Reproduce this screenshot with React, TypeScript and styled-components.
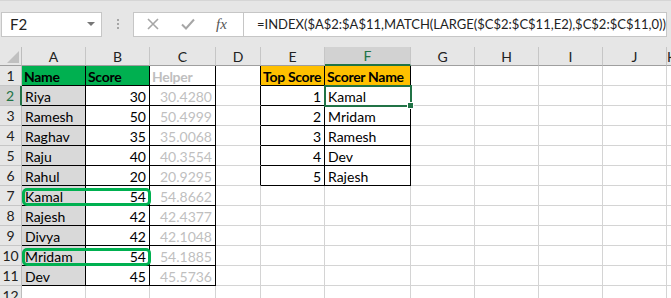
import React from 'react';
import styled, { createGlobalStyle } from 'styled-components';

const GlobalStyle = createGlobalStyle`
  body {
    margin: 0;
    background: #ffffff;
    font-family: Lato, "Open Sans", sans-serif;
  }
`;

const GRID = '#d4d4d4';
const BLACK = '#000000';
const XL_GREEN = '#217346';

const Page = styled.div`
  width: 671px;
  height: 298px;
  overflow: hidden;
  background: #ffffff;
`;

const Toolbar = styled.div`
  display: flex;
  align-items: center;
  height: 47px;
  box-sizing: border-box;
  padding: 11px 4px 11px 1px;
  background: #e6e6e6;
  border-top: 1px solid #d6d6d6;
`;

const NameBox = styled.div`
  display: flex;
  flex-shrink: 0;
  align-items: center;
  justify-content: space-between;
  width: 101px;
  height: 25px;
  box-sizing: border-box;
  padding: 0 6px 0 8px;
  background: #ffffff;
  border: 1px solid #c6c6c6;
  font-size: 15px;
  color: #222;
`;

const Caret = styled.span`
  width: 0;
  height: 0;
  border-left: 4px solid transparent;
  border-right: 4px solid transparent;
  border-top: 4px solid #777;
`;

const Dots = styled.div`
  display: flex;
  flex-shrink: 0;
  flex-direction: column;
  gap: 2px;
  width: 31px;
  align-items: center;
  span {
    width: 2px;
    height: 2px;
    background: #a6a6a6;
  }
`;

const FormulaBox = styled.div`
  display: flex;
  flex: 1;
  min-width: 0;
  height: 25px;
  box-sizing: border-box;
  background: #ffffff;
  border: 1px solid #c6c6c6;
`;

const IconArea = styled.div`
  display: flex;
  flex-shrink: 0;
  align-items: center;
  width: 110px;
  box-sizing: border-box;
  border-right: 1px solid #c6c6c6;
  margin-right: 2px;
  padding-left: 13px;
`;

const Fx = styled.span`
  margin-left: 21px;
  font-family: "Liberation Serif", serif;
  font-style: italic;
  font-size: 15px;
  color: #555;
`;

const FormulaText = styled.div`
  display: flex;
  flex-shrink: 0;
  align-items: center;
  padding-left: 11px;
  font-size: 13px;
  color: #222;
  white-space: nowrap;
`;

const Sheet = styled.div`
  position: relative;
  display: grid;
  grid-template-columns: 22px 64px 64px 66px 45px 64px 86px 64px 64px 64px 64px 1fr;
  grid-template-rows: 19px repeat(12, 20px);
  font-size: 14px;
`;

const Corner = styled.div`
  position: relative;
  background: #e6e6e6;
  border-right: 1px solid #bdbdbd;
  border-bottom: 1px solid #9f9f9f;
  &::after {
    content: '';
    position: absolute;
    right: 2px;
    bottom: 2px;
    border-left: 12px solid transparent;
    border-bottom: 12px solid #c0c0c0;
  }
`;

const ColHead = styled.div<{ $active?: boolean }>`
  display: flex;
  align-items: center;
  justify-content: center;
  box-sizing: border-box;
  background: ${({ $active }) => ($active ? '#d2d2d2' : '#e6e6e6')};
  color: ${({ $active }) => ($active ? XL_GREEN : '#222')};
  border-right: 1px solid #c6c6c6;
  border-bottom: ${({ $active }) => ($active ? `2px solid ${XL_GREEN}` : '1px solid #9f9f9f')};
`;

const RowHead = styled.div<{ $active?: boolean }>`
  display: flex;
  align-items: center;
  justify-content: center;
  box-sizing: border-box;
  background: ${({ $active }) => ($active ? '#d2d2d2' : '#e6e6e6')};
  color: ${({ $active }) => ($active ? XL_GREEN : '#222')};
  border-right: ${({ $active }) => ($active ? `2px solid ${XL_GREEN}` : '1px solid #bdbdbd')};
  border-bottom: 1px solid #c6c6c6;
`;

const Cell = styled.div<{
  $fill?: string;
  $bold?: boolean;
  $num?: boolean;
  $color?: string;
  $right: string;
  $bottom: string;
}>`
  display: flex;
  align-items: center;
  justify-content: ${({ $num }) => ($num ? 'flex-end' : 'flex-start')};
  box-sizing: border-box;
  padding: 2px 3px 0 ${({ $bold }) => ($bold ? 2 : 3)}px;
  overflow: hidden;
  white-space: nowrap;
  background: ${({ $fill }) => $fill || '#ffffff'};
  font-weight: ${({ $bold }) => ($bold ? 700 : 400)};
  letter-spacing: ${({ $bold }) => ($bold ? '-0.3px' : '0')};
  color: ${({ $color }) => $color || '#000'};
  border-right: 1px solid ${({ $right }) => $right};
  border-bottom: 1px solid ${({ $bottom }) => $bottom};
`;

const Highlight = styled.div<{ $top: number }>`
  position: absolute;
  left: 22px;
  top: ${({ $top }) => $top}px;
  width: 129px;
  height: 18px;
  box-sizing: border-box;
  border: 3px solid #00b050;
  border-radius: 5px;
  pointer-events: none;
`;

const Selection = styled.div`
  position: absolute;
  left: 324px;
  top: 38px;
  width: 88px;
  height: 22px;
  box-sizing: border-box;
  border: 2px solid ${XL_GREEN};
  pointer-events: none;
  &::after {
    content: '';
    position: absolute;
    right: -4px;
    bottom: -4px;
    width: 5px;
    height: 5px;
    background: ${XL_GREEN};
    border: 1px solid #ffffff;
  }
`;

const columns = ['A', 'B', 'C', 'D', 'E', 'F', 'G', 'H', 'I', 'J', 'K'];

type Value = string | number;

const rows: Value[][] = [
  ['Name', 'Score', 'Helper', '', 'Top Score', 'Scorer Name'],
  ['Riya', 30, '30.4280', '', 1, 'Kamal'],
  ['Ramesh', 50, '50.4999', '', 2, 'Mridam'],
  ['Raghav', 35, '35.0068', '', 3, 'Ramesh'],
  ['Raju', 40, '40.3554', '', 4, 'Dev'],
  ['Rahul', 20, '20.9295', '', 5, 'Rajesh'],
  ['Kamal', 54, '54.8662'],
  ['Rajesh', 42, '42.4377'],
  ['Divya', 42, '42.1048'],
  ['Mridam', 54, '54.1885'],
  ['Dev', 45, '45.5736'],
  [],
];

// bordered ranges: A1:C11 and E1:F6
const inBox = (r: number, c: number) =>
  (r >= 1 && r <= 11 && c >= 0 && c <= 2) || (r >= 1 && r <= 6 && c >= 4 && c <= 5);

const cellStyle = (r: number, c: number, v: Value) => {
  if (r === 1) {
    if (c <= 1) return { fill: '#00b050', bold: true };
    if (c === 2) return { bold: true, color: '#bfbfbf' };
    if (c === 4 || c === 5) return { fill: '#ffc000', bold: true };
    return {};
  }
  if (c === 0 && r <= 11) return { fill: '#d9d9d9' };
  if (c === 2) return { num: true, color: '#bfbfbf' };
  return { num: typeof v === 'number' };
};

const App: React.FC = () => (
  <Page>
    <GlobalStyle />
    <Toolbar>
      <NameBox>
        F2
        <Caret />
      </NameBox>
      <Dots>
        <span />
        <span />
        <span />
      </Dots>
      <FormulaBox>
        <IconArea>
          <svg width="12" height="12" viewBox="0 0 12 12">
            <path d="M1 1L11 11M11 1L1 11" stroke="#a6a6a6" strokeWidth="1.6" fill="none" />
          </svg>
          <svg width="14" height="12" viewBox="0 0 14 12" style={{ marginLeft: 22 }}>
            <path d="M1 6.5L5 10.5L13 1.5" stroke="#a6a6a6" strokeWidth="2" fill="none" />
          </svg>
          <Fx>fx</Fx>
        </IconArea>
        <FormulaText>=INDEX($A$2:$A$11,MATCH(LARGE($C$2:$C$11,E2),$C$2:$C$11,0))</FormulaText>
      </FormulaBox>
    </Toolbar>
    <Sheet>
      <Corner />
      {columns.map((col) => (
        <ColHead key={col} $active={col === 'F'}>
          {col}
        </ColHead>
      ))}
      {rows.map((row, i) => {
        const r = i + 1;
        return (
          <React.Fragment key={r}>
            <RowHead $active={r === 2}>{r}</RowHead>
            {columns.map((_, c) => {
              const v = row[c] ?? '';
              const s = cellStyle(r, c, v) as {
                fill?: string;
                bold?: boolean;
                num?: boolean;
                color?: string;
              };
              return (
                <Cell
                  key={c}
                  $fill={s.fill}
                  $bold={s.bold}
                  $num={s.num}
                  $color={s.color}
                  $right={inBox(r, c) || inBox(r, c + 1) ? BLACK : GRID}
                  $bottom={inBox(r, c) || inBox(r + 1, c) ? BLACK : GRID}
                >
                  {v}
                </Cell>
              );
            })}
          </React.Fragment>
        );
      })}
      <Highlight $top={141} />
      <Highlight $top={201} />
      <Selection />
    </Sheet>
  </Page>
);

export default App;
